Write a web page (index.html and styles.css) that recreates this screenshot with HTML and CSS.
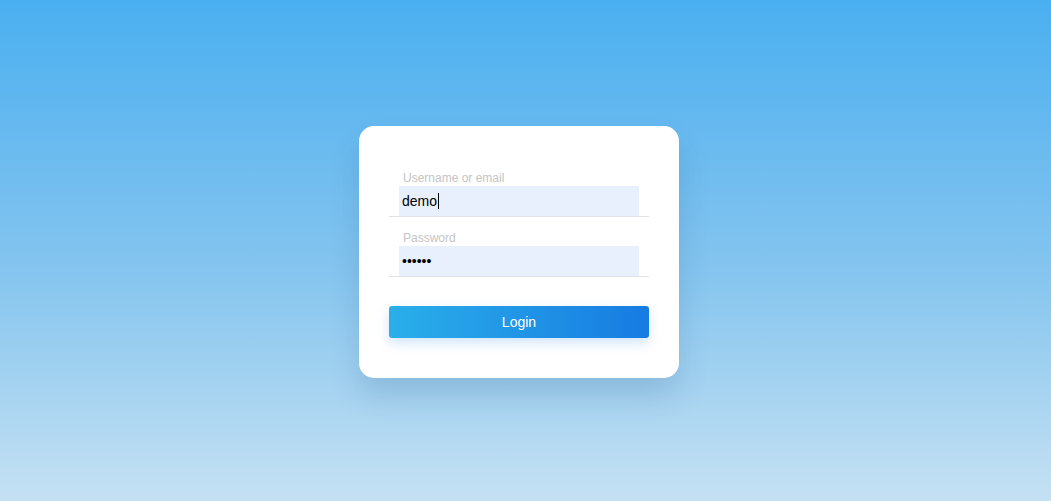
FILE: index.html
```html
<!DOCTYPE html>
<html lang="en">
<head>
<meta charset="utf-8">
<title>Login</title>
<link rel="stylesheet" href="styles.css">
</head>
<body>
<form class="card" onsubmit="return false">
  <div class="field">
    <label class="label" for="user">Username or email</label>
    <div class="input-wrap">
      <input id="user" class="input" type="text" value="demo">
      <span class="caret"></span>
    </div>
  </div>
  <div class="field field-second">
    <label class="label" for="pass">Password</label>
    <div class="input-wrap">
      <input id="pass" class="input" type="password" value="demo12">
    </div>
  </div>
  <button class="btn" type="submit">Login</button>
</form>
</body>
</html>
```
FILE: styles.css
```css
html, body {
  margin: 0;
  height: 100%;
}
body {
  background: linear-gradient(to bottom, #4aaff0 0%, #86c5ef 55%, #c5e1f3 100%);
  display: flex;
  justify-content: center;
  align-items: flex-start;
  padding: 126px 13px 0 0;
  box-sizing: border-box;
  font-family: "Liberation Sans", Arial, sans-serif;
}
.card {
  width: 320px;
  box-sizing: border-box;
  background: #fff;
  border-radius: 15px;
  padding: 45px 30px 40px;
  box-shadow: 0 18px 30px rgba(20, 70, 110, 0.16);
  display: flex;
  flex-direction: column;
}
.field {
  display: flex;
  flex-direction: column;
  border-bottom: 1px solid #dfe3e8;
}
.field-second {
  margin-top: 14px;
}
.label {
  font-size: 12px;
  line-height: 14px;
  padding-bottom: 1px;
  color: #c4c4c4;
  padding-left: 14px;
}
.input-wrap {
  position: relative;
  padding: 0 10px;
}
.input {
  display: block;
  width: 100%;
  box-sizing: border-box;
  height: 30px;
  border: none;
  outline: none;
  margin: 0;
  padding: 0 3px;
  background: #e8f0fe;
  font-family: "Liberation Sans", Arial, sans-serif;
  font-size: 14px;
  color: #000;
}
.caret {
  position: absolute;
  left: 49px;
  top: 7px;
  width: 1px;
  height: 16px;
  background: #000;
}
.btn {
  margin-top: 29px;
  height: 32px;
  border: none;
  border-radius: 3px;
  background: linear-gradient(to right, #2aafea, #177be2);
  color: #fff;
  font-family: "Liberation Sans", Arial, sans-serif;
  font-size: 14px;
  box-shadow: 0 5px 12px rgba(23, 123, 226, 0.2);
  cursor: pointer;
  padding: 0;
}
```
